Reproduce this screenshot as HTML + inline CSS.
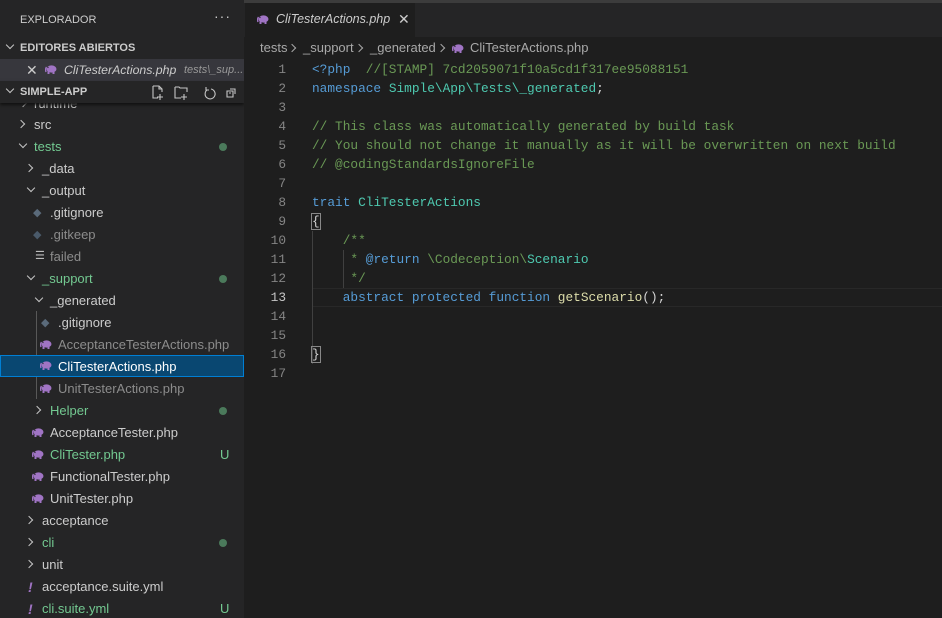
<!DOCTYPE html>
<html><head><meta charset="utf-8"><style>
*{margin:0;padding:0;box-sizing:border-box}
body{width:942px;height:618px;overflow:hidden;background:#1e1e1e;font-family:"Liberation Sans",sans-serif;font-size:13px;color:#ccc;position:relative}
.sb{position:absolute;left:0;top:0;width:244px;height:618px;background:#252526;overflow:hidden}
.r{position:absolute;left:0;width:244px;height:22px;line-height:22px;white-space:nowrap}
.r span{position:absolute}
.ch{position:absolute;top:7px;width:6px;height:6px;border-right:1.3px solid #c5c5c5;border-bottom:1.3px solid #c5c5c5}
.cr{transform:rotate(-45deg)}
.cd{transform:rotate(45deg);top:5px}
.g{color:#73c991}.d{color:#8c8c8c}
.dot{position:absolute;left:219px;top:7px;width:8px;height:8px;border-radius:50%;background:#4b7a5b}
.u{position:absolute;left:220px;color:#73c991}
.el{position:absolute;top:5px;width:13px;height:11px}
.ln{position:absolute;left:255px;width:31px;text-align:right;font-family:"Liberation Mono",monospace;font-size:12.8px;color:#858585;line-height:19px}
.cl{position:absolute;left:312px;font-family:"Liberation Mono",monospace;font-size:12.8px;line-height:19px;white-space:pre;color:#d4d4d4}
.k{color:#569cd6}.t{color:#4ec9b0}.c{color:#6a9955}.f{color:#dcdcaa}
.bc{position:absolute;top:40px;font-size:13px;color:#a9a9a9;white-space:nowrap}
.bch{position:absolute;top:45px;width:6px;height:6px;border-right:1.2px solid #a9a9a9;border-bottom:1.2px solid #a9a9a9;transform:rotate(-45deg)}
</style></head><body>
<svg width="0" height="0" style="position:absolute"><defs><g id="e"><ellipse cx="6.5" cy="5" rx="5" ry="3.6" fill="#a074c4"/><rect x="2.5" y="6" width="2" height="4" fill="#a074c4"/><rect x="7.5" y="6" width="2" height="4" fill="#a074c4"/><path d="M1.5 3 Q0 5 1 8" stroke="#a074c4" stroke-width="1.4" fill="none"/><circle cx="3" cy="3.5" r="0.6" fill="#252526"/></g></defs></svg>
<div style="position:absolute;left:0;top:0;width:942px;height:3px;background:#3c3c3c"></div>
<div class="sb">
 <div class="r" style="top:9px"><span style="left:20px;font-size:11px">EXPLORADOR</span><span style="left:214px;top:-4px;font-size:14px;letter-spacing:1px">···</span></div>
 <div class="r" style="top:37px;font-weight:bold;font-size:11px"><i class="ch cd" style="left:7px"></i><span style="left:20px">EDITORES ABIERTOS</span></div>
 <div class="r" style="top:59px;background:#37373d"><span style="left:26px;font-size:14px">✕</span><svg class="el" style="left:45px" viewBox="0 0 13 11"><use href="#e"/></svg><span style="left:64px;font-style:italic;color:#ccc;font-size:12.3px">CliTesterActions.php</span><span style="left:184px;font-style:italic;font-size:11px;color:#999">tests\_sup...</span></div>
 <div class="r" style="top:81px;font-weight:bold;font-size:11px;background:#252526;z-index:2;box-shadow:0 2px 3px #111"><i class="ch cd" style="left:7px"></i><span style="left:20px">SIMPLE-APP</span>
  <svg style="position:absolute;left:151px;top:4px" width="86" height="15" viewBox="0 0 86 15" fill="none" stroke="#c5c5c5" stroke-width="1.1"><path d="M2 1h6l3 3v3M2 1v12h5M9 9v6M6 12h6M8 1v3h3"/><path d="M24 2h4l1 1h7v4M24 2v11h6M33 9v6M30 12h6"/><path d="M60 4a5 5 0 1 1-4 1M55 2v3h3"/><path d="M79 4h5v5M76 6h6v6h-6zM78 8h2"/></svg></div>
 <div class="r" style="top:93px"><i class="ch cr" style="left:20px"></i><span style="left:34px">runtime</span></div>
 <div class="r" style="top:114px"><i class="ch cr" style="left:18px"></i><span style="left:34px">src</span></div>
 <div class="r" style="top:136px"><i class="ch cd" style="left:20px"></i><span class="g" style="left:34px">tests</span><i class="dot"></i></div>
 <div class="r" style="top:158px"><i class="ch cr" style="left:26px"></i><span style="left:42px">_data</span></div>
 <div class="r" style="top:180px"><i class="ch cd" style="left:28px"></i><span style="left:42px">_output</span></div>
 <div class="r" style="top:202px"><span style="left:33px;color:#5a6a7a;font-size:11px">◆</span><span style="left:50px">.gitignore</span></div>
 <div class="r" style="top:224px"><span style="left:33px;color:#4a5a6a;font-size:11px">◆</span><span class="d" style="left:50px">.gitkeep</span></div>
 <div class="r" style="top:246px"><span style="left:35px;top:-1px;color:#bbb;font-size:11px">☰</span><span class="d" style="left:50px">failed</span></div>
 <div class="r" style="top:268px"><i class="ch cd" style="left:28px"></i><span class="g" style="left:42px">_support</span><i class="dot"></i></div>
 <div class="r" style="top:290px"><i class="ch cd" style="left:36px"></i><span style="left:50px">_generated</span></div>
 <div style="position:absolute;left:36px;top:311px;width:1px;height:88px;background:#585858"></div>
 <div class="r" style="top:312px"><span style="left:41px;color:#5a6a7a;font-size:11px">◆</span><span style="left:58px">.gitignore</span></div>
 <div class="r" style="top:334px"><svg class="el" style="left:40px" viewBox="0 0 13 11"><use href="#e"/></svg><span class="d" style="left:58px">AcceptanceTesterActions.php</span></div>
 <div class="r" style="top:355px;background:#094771;border:1px solid #007fd4"><svg class="el" style="left:39px;top:4px" viewBox="0 0 13 11"><use href="#e"/></svg><span style="left:57px;top:0px;color:#fff">CliTesterActions.php</span></div>
 <div class="r" style="top:378px"><svg class="el" style="left:40px" viewBox="0 0 13 11"><use href="#e"/></svg><span class="d" style="left:58px">UnitTesterActions.php</span></div>
 <div class="r" style="top:400px"><i class="ch cr" style="left:34px"></i><span class="g" style="left:50px">Helper</span><i class="dot"></i></div>
 <div class="r" style="top:422px"><svg class="el" style="left:32px" viewBox="0 0 13 11"><use href="#e"/></svg><span style="left:50px">AcceptanceTester.php</span></div>
 <div class="r" style="top:444px"><svg class="el" style="left:32px" viewBox="0 0 13 11"><use href="#e"/></svg><span class="g" style="left:50px">CliTester.php</span><span class="u">U</span></div>
 <div class="r" style="top:466px"><svg class="el" style="left:32px" viewBox="0 0 13 11"><use href="#e"/></svg><span style="left:50px">FunctionalTester.php</span></div>
 <div class="r" style="top:488px"><svg class="el" style="left:32px" viewBox="0 0 13 11"><use href="#e"/></svg><span style="left:50px">UnitTester.php</span></div>
 <div class="r" style="top:510px"><i class="ch cr" style="left:26px"></i><span style="left:42px">acceptance</span></div>
 <div class="r" style="top:532px"><i class="ch cr" style="left:26px"></i><span class="g" style="left:42px">cli</span><i class="dot"></i></div>
 <div class="r" style="top:554px"><i class="ch cr" style="left:26px"></i><span style="left:42px">unit</span></div>
 <div class="r" style="top:576px"><span style="left:28px;color:#a074c4;font-weight:bold;font-style:italic;font-size:14px">!</span><span style="left:42px">acceptance.suite.yml</span></div>
 <div class="r" style="top:598px"><span style="left:28px;color:#a074c4;font-weight:bold;font-style:italic;font-size:14px">!</span><span class="g" style="left:42px">cli.suite.yml</span><span class="u">U</span></div>
</div>
<div style="position:absolute;left:244px;top:3px;width:698px;height:34px;background:#252526"></div>
<div style="position:absolute;left:245px;top:3px;width:170px;height:34px;background:#1e1e1e"></div>
<svg class="el" style="left:257px;top:14px" viewBox="0 0 13 11"><use href="#e"/></svg>
<div style="position:absolute;left:276px;top:12px;font-style:italic;font-size:12.5px;color:#ccc">CliTesterActions.php</div>
<div style="position:absolute;left:398px;top:11px;font-size:14px;color:#ccc">✕</div>
<span class="bc" style="left:260px">tests</span><i class="bch" style="left:289px"></i>
<span class="bc" style="left:303px">_support</span><i class="bch" style="left:356px"></i>
<span class="bc" style="left:370px">_generated</span><i class="bch" style="left:438px"></i>
<svg class="el" style="left:452px;top:43px" viewBox="0 0 13 11"><use href="#e"/></svg>
<span class="bc" style="left:470px">CliTesterActions.php</span>
<div style="position:absolute;left:313px;top:288px;width:629px;height:19px;border-top:1px solid #282828;border-bottom:1px solid #282828"></div>
<div style="position:absolute;left:312px;top:231px;width:1px;height:133px;background:#404040"></div>
<div style="position:absolute;left:343px;top:250px;width:1px;height:38px;background:#404040"></div>
<div class="ln" style="top:60px">1<br>2<br>3<br>4<br>5<br>6<br>7<br>8<br>9<br>10<br>11<br>12<br><span style="color:#c6c6c6">13</span><br>14<br>15<br>16<br>17</div>
<div class="cl" style="top:60px"><span class="k">&lt;?php</span>  <span class="c">//[STAMP] 7cd2059071f10a5cd1f317ee95088151</span>
<span class="k">namespace</span> <span class="t">Simple\App\Tests\_generated</span>;

<span class="c">// This class was automatically generated by build task</span>
<span class="c">// You should not change it manually as it will be overwritten on next build</span>
<span class="c">// @codingStandardsIgnoreFile</span>

<span class="k">trait</span> <span class="t">CliTesterActions</span>
<span style="outline:1px solid #888">{</span>
    <span class="c">/**</span>
<span class="c">     * </span><span class="k">@return</span> <span class="c">\Codeception\</span><span class="t">Scenario</span>
<span class="c">     */</span>
    <span class="k">abstract</span> <span class="k">protected</span> <span class="k">function</span> <span class="f">getScenario</span>();


<span style="outline:1px solid #888">}</span>
</div>
</body></html>
